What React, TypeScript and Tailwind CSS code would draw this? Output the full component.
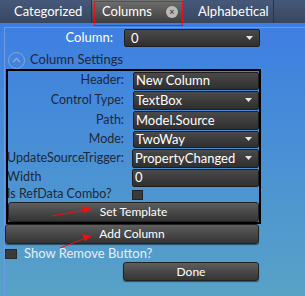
import React from "react";

const font = { fontFamily: 'Lato, "Noto Sans", sans-serif' };

const Arrow = () => (
  <svg width="7" height="4" viewBox="0 0 7 4" className="shrink-0">
    <path d="M0 0 L7 0 L3.5 4 Z" fill="#e8e8e8" />
  </svg>
);

const Field: React.FC<{ value: string; dropdown?: boolean; className?: string }> = ({ value, dropdown, className }) => (
  <div
    className={
      "flex items-center justify-between rounded-[2px] border border-[#1e1e1e] bg-gradient-to-b from-[#4a4a4a] to-[#2f2f2f] pl-[2px] pr-[6px] text-[13px] text-white " +
      (className || "")
    }
  >
    <span className="leading-none">{value}</span>
    {dropdown && <Arrow />}
  </div>
);

const Row: React.FC<{ label: string; left?: boolean; children: React.ReactNode; h?: string }> = ({ label, left, children, h }) => (
  <div className={"flex items-center overflow-hidden " + (h || "h-[20px]")}>
    <div
      className={
        "w-[125px] shrink-0 text-[12.5px] text-[#1e2838] leading-none whitespace-nowrap " +
        (left ? "text-left -ml-[1px]" : "pr-[9px] text-right")
      }
    >
      {label}
    </div>
    <div className="h-full flex-1 py-[0.5px]">{children}</div>
  </div>
);

const Button: React.FC<{ label: string; className?: string }> = ({ label, className }) => (
  <div
    className={
      "flex items-center justify-center rounded-[3px] border border-[#222] bg-gradient-to-b from-[#5e5e5e] to-[#343434] text-[12px] text-white shadow-[0_1px_1px_rgba(0,0,0,0.5)] " +
      (className || "")
    }
  >
    {label}
  </div>
);

export default function App() {
  return (
    <div className="relative flex h-[296px] w-[305px] flex-col overflow-hidden" style={font}>
      {/* tabs */}
      <div className="flex h-[23px] shrink-0 bg-gradient-to-b from-[#46587a] to-[#38465f] text-[13px] text-white">
        <div className="flex w-[92px] items-center border-r border-[#2a3448] pl-[14px]">Categorized</div>
        <div className="flex w-[91px] items-center gap-[14px] bg-gradient-to-b from-[#707070] to-[#3e3e3e] pl-[10px]">
          <span>Columns</span>
          <span className="flex h-[12px] w-[12px] items-center justify-center rounded-full bg-[#b9b9b9] text-[9px] font-bold leading-none text-[#444]">
            ×
          </span>
        </div>
        <div className="flex w-[91px] items-center border-r border-[#2a3448] pl-[15px]">Alphabetical</div>
        <div className="flex-1" />
      </div>

      {/* main */}
      <div className="flex flex-1 flex-col bg-gradient-to-b from-[#3e7ee2] to-[#58a2c6] pt-[4px]">
        <div className="ml-[4px] flex flex-1 flex-col border-l border-t border-[#6a9bea] pt-[1px]">
          <div className="flex h-[18px] items-center">
            <div className="w-[108px] text-right text-[13px] text-white">Column:</div>
            <Field value="0" dropdown className="ml-[11px] h-[18px] w-[136px] pl-[6px]" />
          </div>

          <div className="mt-[4px] flex h-[18px] items-center">
            <div className="ml-[3px] flex h-[17px] w-[17px] items-center justify-center rounded-full border border-[#8ea6c8]">
              <svg width="9" height="6" viewBox="0 0 9 6">
                <path d="M1 5 L4.5 1.5 L8 5" fill="none" stroke="#8ea6c8" strokeWidth="1.6" />
              </svg>
            </div>
            <span className="ml-[5px] text-[13px] text-[#1e2838]">Column Settings</span>
          </div>

          {/* group box */}
          <div className="ml-[1px] mr-[44px] border-2 border-black">
            <Row label="Header:" h="h-[19px]">
              <Field value="New Column" className="h-full" />
            </Row>
            <Row label="Control Type:">
              <Field value="TextBox" dropdown className="h-full" />
            </Row>
            <Row label="Path:">
              <Field value="Model.Source" className="h-full" />
            </Row>
            <Row label="Mode:" h="h-[18px]">
              <Field value="TwoWay" dropdown className="h-full" />
            </Row>
            <Row label="UpdateSourceTrigger:" left>
              <Field value="PropertyChanged" dropdown className="h-full" />
            </Row>
            <Row label="Width" left h="h-[19px]">
              <Field value="0" className="h-full" />
            </Row>
            <Row label="Is RefData Combo?" left h="h-[15px]">
              <div className="flex h-full items-center">
                <div className="h-[10px] w-[11px] border border-[#222] bg-[#3a3a3a]" />
              </div>
            </Row>
            <Button label="Set Template" className="h-[20px]" />
          </div>

          <Button label="Add Column" className="mr-[46px] h-[20px]" />

          <div className="mt-[4px] flex h-[11px] items-center">
            <div className="h-[10px] w-[12px] border border-[#2a2a2a] bg-[#3a3a3a]" />
            <span className="ml-[7px] text-[13px] text-[#e6eef8]">Show Remove Button?</span>
          </div>

          <Button label="Done" className="ml-[118px] mr-[46px] mt-[3px] h-[19px]" />
        </div>
      </div>

      {/* annotations */}
      <div className="pointer-events-none absolute left-[94px] top-[1px] h-[25px] w-[89px] border border-[#e0141e]" />
      <svg className="pointer-events-none absolute left-0 top-0" width="305" height="296">
        <line x1="52" y1="216" x2="86" y2="210" stroke="#f01010" strokeWidth="1" />
        <path d="M92 209 L82 206 L84 213 Z" fill="#f01010" />
        <line x1="60" y1="248" x2="86" y2="238" stroke="#f01010" strokeWidth="1" />
        <path d="M92 236 L82 234 L85 241 Z" fill="#f01010" />
      </svg>
    </div>
  );
}
